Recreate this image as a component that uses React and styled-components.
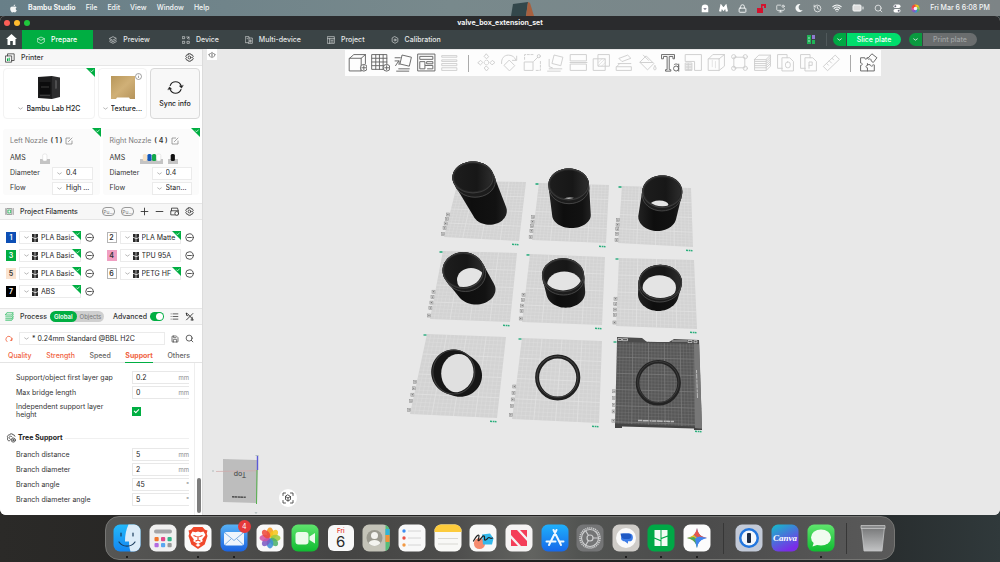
import React from "react";
import styled, { createGlobalStyle } from "styled-components";
import { Wifi, Search, History, MonitorDot, BatteryFull, Lock, List, Save } from "lucide-react";
import { FaApple, FaMoon } from "react-icons/fa";

const GREEN = "#00ae42";

const GlobalStyle = createGlobalStyle`
  *, *::before, *::after { box-sizing: border-box; }
  body {
    margin: 0;
    font-family: Inter, "Liberation Sans", sans-serif;
    font-size: 7px;
    line-height: 10px;
    color: #333;
    background: #20211f;
  }
  button, input, select { font: inherit; color: inherit; margin: 0; padding: 0; border: 0; background: none; }
  button { display: inline-flex; align-items: center; justify-content: center; cursor: pointer; }
  svg { display: block; flex: none; }
  a { color: inherit; text-decoration: none; }
`;

/* ---------- shell ---------- */
const Desktop = styled.div`
  min-height: 100vh;
  display: flex;
  flex-direction: column;
  background: linear-gradient(90deg, #2b2a28, #1f1f1e 50%, #262a2b 85%, #30393b);
`;
const MenuBar = styled.header`
  height: 16px;
  display: flex;
  align-items: center;
  justify-content: space-between;
  padding: 0 10px 0 9px;
  color: #f4f6f6;
  background: linear-gradient(90deg, #687f88, #78898c 45%, #7d8486);
`;
const MenuGroup = styled.nav`
  display: flex;
  align-items: center;
  gap: 10px;
  font-weight: 500;
  white-space: nowrap;
`;
const AppName = styled.a`
  font-weight: 700;
`;
const RoofPeek = styled.svg`
  margin-left: 292px;
  align-self: flex-end;
`;
const AppWindow = styled.main`
  flex: 1;
  display: flex;
  flex-direction: column;
  border-radius: 5px 5px 6px 6px;
  overflow: hidden;
  background: #e8e8e8;
`;
const TitleBar = styled.div`
  height: 14px;
  display: grid;
  grid-template-columns: 1fr auto 1fr;
  align-items: center;
  background: #2a2b2d;
  color: #f2f2f2;
  font-weight: 700;
`;
const Lights = styled.div`
  display: flex;
  gap: 4px;
  padding-left: 4px;
`;
const Light = styled.button`
  width: 6px;
  height: 6px;
  border-radius: 50%;
  background: ${(p) => p.$color};
`;
const TabBar = styled.nav`
  height: 19px;
  display: flex;
  align-items: stretch;
  background: #3b4446;
  color: #e6e8e8;
`;
const HomeButton = styled.button`
  width: 22px;
  color: #fff;
`;
const Tab = styled.button`
  gap: 6px;
  padding: 0 ${(p) => p.$after || 13}px 0 ${(p) => p.$before || 13}px;
  font-weight: 500;
  color: ${(p) => (p.$active ? "#fff" : "inherit")};
  background: ${(p) => (p.$active ? GREEN : "none")};
`;
const Actions = styled.div`
  margin-left: auto;
  display: flex;
  align-items: center;
  gap: 8px;
  padding-right: 23px;
`;
const BarRule = styled.span`
  width: 1px;
  height: 13px;
  margin: 0 -2px 0 3px;
  background: #50595b;
`;
const SplitButton = styled.div`
  display: flex;
  gap: 1px;
  height: 13px;
  border-radius: 7px;
  overflow: hidden;
  button:first-child { width: 13px; background: ${(p) => (p.$off ? "#0a9a3f" : "#00a843")}; color: #fff; }
  button:last-child {
    width: 54px;
    font-weight: 500;
    background: ${(p) => (p.$off ? "#6a6d6e" : "#00de6c")};
    color: ${(p) => (p.$off ? "#9fa2a3" : "#fff")};
  }
`;
const Workspace = styled.div`
  flex: 1;
  display: flex;
`;

/* ---------- sidebar ---------- */
const Sidebar = styled.aside`
  width: 203px;
  flex: none;
  display: flex;
  flex-direction: column;
  background: #fff;
  border-right: 1px solid #dcdcdc;
`;
const SectionHead = styled.div`
  height: 17px;
  display: flex;
  align-items: center;
  gap: 6px;
  padding: 0 8px 0 5px;
  border: solid #e6e6e6;
  border-width: 1px 0;
  background: #f7f7f7;
`;
const SectionTitle = styled.h2`
  margin: 0;
  font-size: 7px;
  font-weight: 500;
  white-space: nowrap;
`;
const HeadTools = styled.div`
  margin-left: auto;
  display: flex;
  align-items: center;
  gap: 6px;
`;
const PrinterRow = styled.div`
  display: grid;
  grid-template-columns: 92px 49px 50px;
  gap: 3px;
  padding: 2px 3px 0;
`;
const DeviceCard = styled.div`
  position: relative;
  height: 51px;
  display: flex;
  flex-direction: column;
  align-items: center;
  justify-content: space-between;
  padding: 7px 4px 3px;
  border: 1px solid #f3f3f3;
  border-radius: 4px;
  font-weight: 500;
`;
const SyncButton = styled.button`
  height: 51px;
  flex-direction: column;
  gap: 3px;
  font-weight: 500;
  color: #222;
  background: #f8f8f8;
  border: 1px solid #d9d9d9;
  border-radius: 4px;
`;
const CornerBadge = styled.svg`
  position: absolute;
  top: -1px;
  right: -1px;
`;
const InfoBadge = styled.svg`
  position: absolute;
  top: 4px;
  right: 4px;
`;
const NozzleRow = styled.div`
  display: grid;
  grid-template-columns: 1fr 1fr;
  gap: 3px;
  padding: 10px 3px 8px;
`;
const NozzleCard = styled.div`
  position: relative;
  display: grid;
  grid-template-columns: 42px 1fr;
  grid-template-rows: 20px 14px 16px 14px;
  align-items: center;
  padding: 2px 7px 0;
  background: #fbfbfb;
  border-radius: 3px;
`;
const NozzleTitle = styled.div`
  grid-column: 1 / -1;
  display: flex;
  align-items: center;
  gap: 3px;
  color: #7a7a7a;
  white-space: nowrap;
  b { color: #333; font-weight: 600; }
`;
const AmsRow = styled.div`
  grid-column: 1 / -1;
  display: flex;
  align-items: center;
  gap: 5px;
  > span { width: 25px; }
`;
const DropBox = styled.span`
  position: relative;
  flex: ${(p) => (p.$grow ? 1 : "none")};
  min-width: 0;
  height: 13px;
  display: flex;
  align-items: center;
  gap: ${(p) => (p.$tight ? 3 : 4)}px;
  padding-left: ${(p) => (p.$bare ? 0 : 4)}px;
  border: ${(p) => (p.$bare ? "0" : "1px solid #ebebeb")};
  background: #fff;
  select {
    appearance: none;
    flex: 1;
    min-width: 0;
    outline: none;
    color: #262626;
  }
`;
const FilamentGrid = styled.div`
  display: grid;
  grid-template-columns: repeat(2, minmax(0, 1fr));
  row-gap: 5px;
  column-gap: 13px;
  padding: 11px 8px 10px 6px;
`;
const FilamentItem = styled.div`
  display: flex;
  align-items: center;
  gap: 3px;
`;
const RemoveButton = styled.button`
  margin-left: 1px;
`;
const ColorChip = styled.button`
  width: 10px;
  height: 11px;
  font-weight: 600;
  background: ${(p) => p.$color};
  color: ${(p) => (p.$dark ? "#fff" : "#333")};
  box-shadow: ${(p) => (p.$outlined ? "inset 0 0 0 1px #b4b4b4" : "none")};
`;
const PillButton = styled.button`
  width: 13px;
  height: 9px;
  border: 1px solid #999;
  border-radius: 4px;
  font-size: 5px;
  line-height: 6px;
  color: #777;
`;
const Segments = styled.div`
  display: flex;
  margin-left: -3px;
  height: 11px;
  border-radius: 6px;
  background: #cfcfcf;
`;
const Segment = styled.button`
  padding: 0 ${(p) => (p.$on ? 4 : 3)}px;
  border-radius: 6px;
  font-size: 6px;
  font-weight: ${(p) => (p.$on ? 600 : 400)};
  color: ${(p) => (p.$on ? "#fff" : "#777")};
  background: ${(p) => (p.$on ? GREEN : "none")};
`;
const SwitchLabel = styled.label`
  display: flex;
  align-items: center;
  gap: 3px;
  font-weight: 500;
`;
const Switch = styled.input`
  appearance: none;
  width: 14px;
  height: 9px;
  border-radius: 5px;
  background: ${GREEN};
  &::after {
    content: "";
    display: block;
    width: 7px;
    height: 7px;
    margin: 1px 1px 1px 6px;
    border-radius: 50%;
    background: #fff;
  }
`;
const PresetRow = styled.div`
  display: flex;
  align-items: center;
  gap: 6px;
  padding: 7px 8px 5px 5px;
`;
const ProcessTabs = styled.div`
  display: flex;
  justify-content: space-between;
  padding: 0 12px 0 8px;
  border-bottom: 1px solid #e4e4e4;
`;
const ProcessTab = styled.button`
  height: 12px;
  color: ${(p) => (p.$changed ? "#f0623f" : "#666")};
  font-weight: ${(p) => (p.$active ? 700 : 500)};
  box-shadow: ${(p) => (p.$active ? `0 1px 0 ${GREEN}` : "none")};
`;
const SettingsPane = styled.div`
  flex: 1;
  display: flex;
`;
const SettingsList = styled.div`
  flex: 1;
  min-width: 0;
  padding: 7px 5px 7px 16px;
`;
const ScrollTrack = styled.div`
  width: 8px;
  flex: none;
  display: flex;
  align-items: flex-end;
  justify-content: center;
  border-left: 1px solid #eee;
  padding-bottom: 2px;
`;
const ScrollThumb = styled.div`
  width: 4px;
  height: 35px;
  border-radius: 2px;
  background: #7d7d7d;
`;
const SettingRow = styled.label`
  display: grid;
  grid-template-columns: 116px minmax(0, 1fr);
  align-items: center;
  min-height: ${(p) => (p.$tall ? 22 : 15)}px;
  line-height: 8px;
  > span:first-child { max-width: 104px; }
`;
const NumberBox = styled.span`
  display: flex;
  align-items: center;
  height: 13px;
  padding-left: 3px;
  border: solid #e8e8e8;
  border-width: 1px 0 1px 1px;
  input { flex: 1; min-width: 0; outline: none; color: #222; }
  small { font-size: 6px; color: #8a8a8a; }
`;
const Check = styled.input`
  appearance: none;
  width: 9px;
  height: 9px;
  background: ${GREEN};
  &::after {
    content: "";
    display: block;
    width: 5px;
    height: 3px;
    margin: 2px;
    border: solid #fff;
    border-width: 0 0 1px 1px;
    transform: rotate(-45deg);
  }
`;
const GroupTitle = styled.h3`
  display: flex;
  align-items: center;
  gap: 2px;
  margin: 11px 0 4px -10px;
  font-size: 7px;
  font-weight: 700;
  color: #222;
  &::after { content: ""; flex: 1; height: 1px; background: #f0f0f0; }
`;

/* ---------- viewport ---------- */
const Viewport = styled.section`
  flex: 1;
  position: relative;
  display: flex;
  background: #e8e8e8;
`;
const Scene = styled.svg`
  width: 100%;
  height: auto;
  align-self: flex-start;
`;
const CollapseButton = styled.button`
  position: absolute;
  top: 0;
  left: 4px;
  width: 10px;
  height: 11px;
  background: #fff;
`;
const ToolStrip = styled.div`
  position: absolute;
  top: 1px;
  left: 142px;
  height: 26px;
  display: flex;
  align-items: center;
  padding: 0 1px;
  background: #fdfdfd;
`;
const Tool = styled.button`
  width: 23px;
  height: 24px;
  padding-bottom: 2px;
  color: ${(p) => (p.$off ? "#cfcfcf" : "#666")};
`;
const ToolRule = styled.span`
  width: 1px;
  height: 17px;
  margin: 0 6px 0 7px;
  background: #aaa;
`;
const FitButton = styled.button`
  position: absolute;
  bottom: 8px;
  left: 76px;
  width: 18px;
  height: 18px;
  border-radius: 50%;
  background: #fff;
  color: #444;
`;

/* ---------- dock ---------- */
const DockArea = styled.footer`
  height: 47px;
  display: flex;
  justify-content: center;
  align-items: flex-start;
  padding-top: 1px;
`;
const Dock = styled.nav`
  width: 79%;
  min-width: 790px;
  height: 44px;
  display: flex;
  align-items: center;
  justify-content: space-between;
  padding: 0 7px;
  border: 1px solid #767674;
  border-radius: 14px;
  background: linear-gradient(90deg, #565654, #444443 30%, #4d4d4c 44%, #626360 54%, #525452 60%, #4b4b4b 75%, #5a5a5a);
`;
const DockItem = styled.button`
  position: relative;
  width: 28px;
  height: 28px;
  &::after {
    content: "";
    display: ${(p) => (p.$running ? "block" : "none")};
    position: absolute;
    bottom: -6px;
    left: 13px;
    width: 2px;
    height: 2px;
    border-radius: 50%;
    background: #0c0c0c;
  }
`;
const DockRule = styled.span`
  width: 1px;
  height: 31px;
  margin: 0 4px;
  background: #373737;
`;
const CountBadge = styled.span`
  position: absolute;
  top: -4px;
  right: -3px;
  width: 13px;
  height: 13px;
  border-radius: 50%;
  background: #e5393a;
  color: #fff;
  font-size: 7px;
  line-height: 13px;
`;
const CalendarFace = styled.span`
  width: 26px;
  height: 26px;
  display: flex;
  flex-direction: column;
  align-items: center;
  justify-content: center;
  border-radius: 6px;
  background: #f8f8f8;
  color: #2a2a2a;
  font-size: 15px;
  line-height: 15px;
  small { font-size: 6px; line-height: 7px; font-weight: 600; color: #e8493f; }
`;

/* ---------- small drawings ---------- */
const Line = ({ w = 10, box = 12, sw = 0.9, children, ...rest }) => (
  <svg width={w} height={w} viewBox={`0 0 ${box} ${box}`} fill="none" stroke="currentColor" strokeWidth={sw} strokeLinecap="round" strokeLinejoin="round" {...rest}>
    {children}
  </svg>
);
const Chevron = ({ color = "#a0a0a0" }) => (
  <Line w={5} box={6} sw={0.9} color={color}><path d="M.8 2.200l2.200 1.600 2.200-1.600" /></Line>
);
const Corner = () => (
  <CornerBadge width="9" height="9" viewBox="0 0 9 9">
    <path d="M0 0h9v9z" fill={GREEN} />
    <path d="M4.400 2.600l1.200 1.200 2-2.200" stroke="#fff" strokeWidth=".7" fill="none" />
  </CornerBadge>
);
const BambuMark = () => (
  <svg width="6" height="8" viewBox="0 0 6 8" fill="#2b2b2b">
    <path d="M0 0h2.700v3.900L0 2.900zM0 3.700l2.700 1V8H0zM3.300 0H6v3.200L3.300 4.200zM3.300 5L6 4v4H3.300z" />
  </svg>
);
const Spool = ({ colors, wide }) => (
  <svg width={wide ? 23 : 10} height="12" viewBox={`0 0 ${wide ? 23 : 10} 12`}>
    <path d={wide ? "M0 12V7h23v5z" : "M0 12V7h10v5z"} fill="#c4c4c4" />
    {colors.map((c, i) => (
      <rect key={i} x={(wide ? 2.8 : 2.7) + i * 4.6} y="2" width="4.200" height="7" rx="1.500" fill={c} stroke={c === "#fff" ? "#ccc" : "none"} strokeWidth=".4" />
    ))}
  </svg>
);
const Gear = () => (
  <Line w={9} box={12} sw={1.1}>
    <path d="M4.600 1h2.800l.6 1.500 1.600-.2L11 4.700 10 6l1 1.300-1.400 2.400L8 9.500 7.400 11H4.600L4 9.500l-1.600.2L1 7.300 2 6 1 4.700l1.400-2.400 1.600.2z" />
    <circle cx="6" cy="6" r="1.900" />
  </Line>
);
const TreeIcon = () => (
  <Line w={10} box={12} sw={0.8}>
    <path d="M4.500 9.200L3 9.500 1.500 7.200l.8-1.300-.8-1.300L3 2.200l1.500.2.700-1.400h2.400l.7 1.400 1.400-.2 1 1.800" />
    <path d="M7.500 4.800a2 2 0 1 0-2 2.900" /><circle cx="8.800" cy="8.500" r="2.500" /><path d="M8.800 7.400v2.200M7.700 8.500h2.200" />
  </Line>
);
const ToolsIcon = () => (
  <Line w={9} sw={1.2}><path d="M2 10.500L10.500 2M1.500 2l2 .3 6.500 7M8 10.500h3M9.500 7v4M2 1.500v3l2 .5" /></Line>
);
const Edit = () => (
  <Line w={8} box={12} sw={1} color="#777"><path d="M7 1.500H1.500v9h9V6M5 7l5.500-5.500" /></Line>
);
const Remove = () => (
  <Line w={9} box={12} sw={1.1}><circle cx="6" cy="6" r="5" /><path d="M3.500 6h5" /></Line>
);

/* ---------- toolbar drawings (18 unit grid) ---------- */
const toolShapes = {
  addCube: <><path d="M1.500 5h11v12h-11zM1.500 5l4-3.500h11l-4 3.500M16.500 1.500V10M12.500 14v3" /><circle cx="15" cy="14" r="3.200" fill="#fff" /><path d="M13 14h4M15 12v4" /></>,
  addPlate: <><path d="M1 1.500h14v14H1zM4.500 1.500v14M8 1.500v14M11.500 1.500v14M1 5h14M1 8.500h14M1 12h14" /><circle cx="14.800" cy="14" r="3.200" fill="#fff" /><path d="M13 14h4M14.800 12v4" /></>,
  orient: <><path d="M8 2l8.500 2-2 8.500L6 10.500zM4.500 15h10M2.500 17.200h11.500M1 4.500h5M1.500 12l3-4.500M4.500 7.500H1M4.800 8v3" /></>,
  arrange: <><path d="M1 1h16v16H1zM3 3.200h12v2.800H3zM3 8.200h4.500V15H3zM9.500 8.200H15v2H9.500zM8 11.800h7V15h-5" /></>,
  layers: <><path d="M2 2.500h14v1.500H2zM2 6.500h14V8H2zM2 10h14v2H2zM2 14h14v2.500H2z" /></>,
  move: <><circle cx="9" cy="9" r="2.200" strokeDasharray="1.500 1" /><path d="M9 1l2 2.500L9 5.500 7 3.500zM9 12.500l2 2-2 2.500-2-2.500zM1 9l2.500-2 2 2-2 2zM12.500 9l2-2L17 9l-2.500 2z" /></>,
  rotate: <><path d="M9 7l5 5-5 5-5-5zM1.500 10C1 5 4 2 8 2c3.500 0 6 2 7 4.500M15.800 3v4h-4" /></>,
  scale: <><path d="M1.500 8.500h8v8h-8z" /><path d="M1.500 6V1.500H10M16.500 8v8.500H12" strokeDasharray="2 1.500" /><path d="M10 8l4-4" /><circle cx="15" cy="3" r="1.500" /></>,
  lay: <><path d="M8 2l8 2-2 8-8-2zM3 15h12M1.500 17.200h12M3 6v7l3 1" /></>,
  cut: <><path d="M1.500 1.500h15v6h-15zM1.500 10.500h15v6h-15zM1 9h16" /></>,
  bool: <><path d="M1.500 5.500h11v11h-11zM6 1.500h10.500v11H6z" /><path d="M6 9l3.500-3.500M6 12l6.500-6.500M9 12.500l3.500-3.500" strokeWidth=".5" /></>,
  paintSupport: <><path d="M4 5l8-3 3 3-8 3zM3 10h12M1.500 13h14v3.500H1.500zM1.500 13l3-3" /></>,
  bucket: <><path d="M8 3l7 7-6 6-7-7zM2 9h12M5 2l5 5" /><path d="M16 12c1.500 2 1.500 4 0 4s-1.500-2 0-4" /></>,
  text: <><path d="M.8 1.500h12v4h-1.500V3.300H7.800v12.500h1.500v1.400H4.300v-1.400h1.500V3.300H2.300v2.200H.8z" /><path d="M16.800 10.500v6.700M12.500 11c1.200-1.200 4.300-.8 4.300 1.500" /><circle cx="14.300" cy="14.700" r="2.400" /></>,
  svgTool: <><path d="M1.500 1.500h15v15H10V8H1.500z" /><path d="M1.500 9.500h6v7h-6zM2 11h5M2 12.500h5M2 14h5M2 15.500h5M4 10v6" /></>,
  box: <><path d="M1.500 5.500h10v11h-10zM1.500 5.500l4-4h11l-5 4M16.500 1.500v11l-5 4" /><path d="M8 8v6M5 7v6" strokeWidth=".5" /></>,
  frame: <><path d="M4 4h10v10H4z" /><circle cx="3.500" cy="3.500" r="2" /><circle cx="14.500" cy="3.500" r="2" /><circle cx="3.500" cy="14.500" r="2" /><circle cx="14.500" cy="14.500" r="2" /></>,
  stack: <><path d="M1.500 6l4-4h11l-4 4zM1.500 6v10.500h11V6M16.500 2v10.500l-4 4M1.500 8h11l4-4M1.500 10h11l4-4M1.500 12h11l4-4M1.500 14h11l4-4" /></>,
  pageO: <><path d="M6 14.500H1.500v-13h9v3M6 4.500h7l3.500 3.500v9H6z" /><rect x="9" y="8.500" width="4.500" height="5.500" rx="2" /></>,
  pageP: <><path d="M6 14.500H1.500v-13h9v3M6 4.500h7l3.500 3.500v9H6zM9.500 14.500v-6h3v3.200h-3" /></>,
  ruler: <><path d="M1.500 12.500l11-10.500 4 4L5.500 16.500zM4.500 10l1.500 1.500M7 7.500l2 2M9.500 5l1.500 1.500" /></>,
  assembly: <><path d="M8.500 4.500H7.500c.3 1.800-2.300 1.800-2 0H1.500v5c2-.4 2 2.600 0 2.200V17h13v-5.500M8 17v-3c-1.800.3-1.800-2.500 0-2.200V10M1.500 10.800M8 11h2.500c.3 2 3 2 3 0M12.500 1L17 4.500 13.500 9l-2-1.500c.5-1.800-1.500-2.500-2.500-1.500L8.500 5.500z" /></>,
};
const tools = [
  ["addCube", "Add"], ["addPlate", "Add plate"], ["orient", "Auto orient"], ["arrange", "Arrange"], ["layers", "Variable layer height", true], null,
  ["move", "Move", true], ["rotate", "Rotate", true], ["scale", "Scale", true], ["lay", "Lay on face", true], ["cut", "Cut", true], ["bool", "Mesh boolean", true],
  ["paintSupport", "Support painting", true], ["bucket", "Color painting", true], ["text", "Text"], ["svgTool", "SVG", true], ["box", "Seam", true],
  ["frame", "Brim ears", true], ["stack", "Fuzzy skin", true], ["pageO", "Split to objects", true], ["pageP", "Split to parts", true], ["ruler", "Measure", true], null,
  ["assembly", "Assembly view"],
];

/* ---------- 3D scene ---------- */
const mix = (a, b, t) => [a[0] + (b[0] - a[0]) * t, a[1] + (b[1] - a[1]) * t];
const pts = (list) => list.map((p) => p.map((n) => n.toFixed(1)).join(",")).join(" ");

function Plate({ corners, dark }) {
  const [tl, tr, br, bl] = corners;
  const n = dark ? 26 : 20;
  const lines = [];
  for (let i = 1; i < n; i++) {
    const t = i / n;
    lines.push([mix(tl, tr, t), mix(bl, br, t), i % 5 === 0], [mix(tl, bl, t), mix(tr, br, t), i % 5 === 0]);
  }
  const icons = [0.6, 0.68, 0.76, 0.84, 0.95].map((t) => mix(tl, bl, t));
  return (
    <g>
      <polygon points={pts(corners)} fill={dark ? "#585858" : "#d3d3d3"} />
      {lines.map(([a, b, major], i) => (
        <line key={i} x1={a[0]} y1={a[1]} x2={b[0]} y2={b[1]} stroke={dark ? "#808080" : "#e4e4e4"} strokeWidth={major ? 0.7 : 0.3} />
      ))}
      {icons.map(([x, y], i) => (
        <g key={i}>
          <rect x={x - 3.2} y={y - 1.6} width="3" height="3" fill="#d8d8d8" stroke="#8a8a8a" strokeWidth=".5" />
          <rect x={x - 2.3} y={y - 0.7} width="1.200" height="1.200" fill="#777" />
        </g>
      ))}
      <path d={`M${tl[0] - 3.5} ${tl[1] + 1}h3`} stroke="#17a673" strokeWidth="1.300" />
      <path d={`M${br[0] - 7} ${br[1] + 3.3}l7 .4`} stroke="#2bae7c" strokeWidth="1.500" strokeDasharray="2 .7 1.300 .5" />
    </g>
  );
}

function hull(ellipses) {
  const all = [];
  ellipses.forEach(([cx, cy, rx, ry]) => {
    for (let i = 0; i < 60; i++) {
      const a = (i / 60) * Math.PI * 2;
      all.push([cx + rx * Math.cos(a), cy + ry * Math.sin(a)]);
    }
  });
  all.sort((a, b) => a[0] - b[0] || a[1] - b[1]);
  const cross = (o, a, b) => (a[0] - o[0]) * (b[1] - o[1]) - (a[1] - o[1]) * (b[0] - o[0]);
  const half = (list) => {
    const out = [];
    list.forEach((p) => {
      while (out.length > 1 && cross(out[out.length - 2], out[out.length - 1], p) <= 0) out.pop();
      out.push(p);
    });
    out.pop();
    return out;
  };
  return [...half(all), ...half([...all].reverse())];
}

function Tube({ id, top, base, hole, lip }) {
  const [cx, cy, rx, ry] = top;
  return (
    <g>
      <clipPath id={id}><ellipse cx={cx} cy={cy} rx={rx - 1.8} ry={ry - 1.8} /></clipPath>
      <polygon points={pts(hull([top, base]))} fill="url(#wall)" />
      <polygon points={pts(hull([top, [cx + lip[0], cy + lip[1], rx, ry]]))} fill="#1f1f1f" />
      <ellipse cx={cx + lip[0]} cy={cy + lip[1]} rx={rx - 0.5} ry={ry - 0.3} fill="#1c1c1c" stroke="#484848" strokeWidth=".9" />
      <ellipse cx={cx} cy={cy} rx={rx - 0.6} ry={ry - 0.6} fill="#242424" stroke="#3c3c3c" strokeWidth="1.100" />
      <g clipPath={`url(#${id})`}>
        <ellipse cx={cx} cy={cy} rx={rx - 1.8} ry={ry - 1.8} fill="url(#bore)" />
        {hole && <ellipse cx={hole[0]} cy={hole[1]} rx={hole[2]} ry={hole[3]} fill="#e4e4e4" />}
      </g>
    </g>
  );
}

const plates = [
  [[458, 181], [526, 182], [519, 241], [444, 237]],
  [[539, 183], [609, 185], [606, 243], [532, 240]],
  [[622, 186], [691, 188], [693, 247], [618, 243]],
  [[443, 251], [517, 253], [510, 322], [430, 319]],
  [[530, 254], [605, 257], [602, 325], [522, 322]],
  [[619, 258], [694, 260], [697, 329], [616, 326]],
  [[427, 334], [506, 337], [497, 418], [410, 414]],
  [[522, 338], [602, 341], [599, 423], [512, 419]],
];
const tubes = [
  { top: [473, 177.5, 20.7, 16], base: [489.5, 211, 17.3, 13.8], lip: [2, 4] },
  { top: [568.7, 184.5, 20.3, 16], base: [571.5, 215, 19.3, 13], lip: [0.3, 3.5], hole: [569.8, 199.7, 8, 2.2] },
  { top: [662.3, 191.7, 20, 16.3], base: [657.3, 216.7, 19, 14.3], lip: [-0.5, 3.2], hole: [659.3, 204.5, 9, 4] },
  { top: [463.3, 270.5, 20.8, 18.3], base: [476, 289.5, 19.5, 15], lip: [2, 3], hole: [471, 280, 14, 12] },
  { top: [563, 275.3, 21, 17], base: [565.7, 292, 19.5, 15.7], lip: [0.5, 3], hole: [564.3, 284, 17, 12.5] },
  { top: [660.3, 282.3, 21.7, 17.5], base: [658.3, 294, 20.3, 17], lip: [-0.5, 2.5], hole: [659.3, 287.7, 16.7, 12.5] },
];

const BuildScene = () => (
  <Scene viewBox="203 49 797 466" role="img" aria-label="Build plates">
    <defs>
      <linearGradient id="wall"><stop offset="0" stopColor="#222" /><stop offset=".35" stopColor="#0e0e0e" /><stop offset=".8" stopColor="#121212" /><stop offset="1" stopColor="#222" /></linearGradient>
      <linearGradient id="bore"><stop offset="0" stopColor="#1d1d1d" /><stop offset=".6" stopColor="#171717" /><stop offset="1" stopColor="#2c2c2c" /></linearGradient>
    </defs>
    {plates.map((c, i) => <Plate key={i} corners={c} />)}
    <Plate dark corners={[[617, 341], [699, 343], [702, 428], [615, 425]]} />
    <path d="M617 337l25 1 5 4h22l5-3 25 1 .2 4L617 342z" fill="#4b4b4b" />
    <path d="M618 338.500h3.500v2H618zM622.500 338.700h5v2h-5zM672 341h15M688 340.500h4v2h-4zM694 340.700h3v2h-3z" fill="none" stroke="#ddd" strokeWidth=".7" />
    <path d="M694 344l5.300.2 2.700 84-7-.3z" fill="#777" />
    <path d="M615 423.500l80 3v1.500l7 .3V430h-8v-1.500l-72-2v1.500h-7z" fill="#444" />
    <path d="M638 420.500l36 1" stroke="#bbb" strokeWidth="1.500" strokeDasharray="4 .6 6 1 2 .5" />
    <path d="M696.500 370l1 28" stroke="#bbb" strokeWidth="1" strokeDasharray="3 .7 5 1" />
    {tubes.map((t, i) => <Tube key={i} id={`tube${i}`} {...t} />)}
    <g fill="none">
      <polygon points={pts(hull([[453.5, 372, 22.3, 22.5], [460, 375.5, 22, 21.3]]))} fill="#161616" />
      <ellipse cx="453.800" cy="372" rx="21" ry="22" stroke="#3c3c3c" strokeWidth="1.200" />
      <clipPath id="ring7"><ellipse cx="453.800" cy="372" rx="19.800" ry="20.500" /></clipPath>
      <ellipse cx="458.500" cy="373.500" rx="17.300" ry="19.500" fill="#e0e0e0" clipPath="url(#ring7)" />
      <ellipse cx="557.700" cy="377.600" rx="20.600" ry="21" stroke="#1f1f1f" strokeWidth="4" />
      <ellipse cx="557.500" cy="376.800" rx="20.500" ry="20.500" stroke="#4a4a4a" strokeWidth=".8" />
      <ellipse cx="658.300" cy="382.800" rx="20.800" ry="21" stroke="#232323" strokeWidth="3.600" />
      <ellipse cx="658.300" cy="382" rx="20.600" ry="20.600" stroke="#444" strokeWidth=".7" />
    </g>
    <path d="M223 459l35 1-1 43-34-1z" fill="#bdbdbd" />
    <path d="M216 471.500l41-.8" stroke="#d3a9a9" strokeWidth=".7" />
    <path d="M257.500 456v14" stroke="#5b5bd6" strokeWidth="1.400" />
    <path d="M257 470l-.5 34" stroke="#55b04c" strokeWidth="1" />
    <text transform="rotate(180 240 474.500)" x="240" y="477" textAnchor="middle" fontSize="7" fill="#3c3c3c">Top</text>
    <path d="M232 496.800l14 .5" stroke="#555" strokeWidth="1.600" strokeDasharray="2 .4 3 .5" />
    <path d="M255.500 455.500h3M255 512l1 1.500 1-1.500M213 470v2" stroke="#9aa" strokeWidth=".7" fill="none" />
  </Scene>
);

/* ---------- dock drawings (28 unit grid) ---------- */
const Tile = ({ fill, children }) => (
  <svg width="28" height="28" viewBox="0 0 28 28">
    <rect x=".5" y=".5" width="27" height="27" rx="6.500" fill={fill} />
    {children}
  </svg>
);
const petals = ["#f79a1c", "#f7c51d", "#9fc93c", "#4fb26b", "#3f8fd6", "#7c5cc4", "#d254a4", "#ee4b3d"];
const dockApps = [
  { name: "Finder", running: true, art: <Tile fill="url(#gFinder)"><path d="M15.500 .5H21a6.500 6.500 0 0 1 6.500 6.500v14a6.500 6.500 0 0 1-6.500 6.500h-3.500c-1-3-1.500-6-1.500-10h-4c0-6 1-12 3.500-17z" fill="#dcecf8" /><path d="M8 9v3M20 9v3M6 18c4 5.500 12 5.500 16 0" stroke="#1b3c5c" strokeWidth="1.200" fill="none" strokeLinecap="round" /></Tile> },
  { name: "Launchpad", art: <Tile fill="#f0f0f0"><rect x="5" y="5.500" width="18" height="4" rx="2" fill="#a5a5a8" />{["#f1762f", "#e24a89", "#31b58a", "#b46be0", "#5aa7f0", "#9a9a9a"].map((c, i) => <rect key={c} x={5.5 + (i % 3) * 6.5} y={13 + Math.floor(i / 3) * 6} width="4.200" height="4.200" rx="1" fill={c} />)}</Tile> },
  { name: "Brave", running: true, art: <Tile fill="#fafafa"><path d="M9.500 3h9l2.500 2.800 2.500.7-.8 3 .8 2.500-2.800 8.500L14 25l-6.700-4.500L4.500 12l.8-2.500-.8-3L7 5.800z" fill="#f0482b" /><path d="M8.500 7.500l3 .7L14 7.500l2.500.7 3-.7 2 3.500-3.300 4.200.5 2-4.700 2.800-4.700-2.800.5-2L6.500 11z" fill="#fff" /><path d="M9.500 11.500l3.200 1.200M18.500 11.500l-3.200 1.200M14 12v4M11.500 17.300l2.500-1.300 2.500 1.300" stroke="#f0482b" strokeWidth="1.200" fill="none" /><path d="M11.500 21l2.500-1.200L16.500 21 14 22.800z" fill="#fff" /></Tile> },
  { name: "Mail", running: true, badge: "4", art: <Tile fill="url(#gMail)"><rect x="4" y="8" width="20" height="13.500" rx="2.500" fill="#eef5fc" /><path d="M5 9l9 7.500L23 9M5 20.500l6.500-6M23 20.500l-6.500-6" stroke="#7fb0e4" fill="none" /></Tile> },
  { name: "Photos", art: <Tile fill="#f8f8f8">{petals.map((c, i) => <ellipse key={c} cx="14" cy="8.500" rx="3.300" ry="5" fill={c} opacity=".88" transform={`rotate(${i * 45} 14 14)`} />)}</Tile> },
  { name: "FaceTime", art: <Tile fill="url(#gGreen)"><rect x="4.500" y="8" width="13" height="12.500" rx="3" fill="#eafbea" /><path d="M18.500 12.500L24 9v10.500l-5.500-3.500z" fill="#eafbea" /></Tile> },
  { name: "Calendar", art: <CalendarFace><small>Fri</small>6</CalendarFace> },
  { name: "Contacts", art: <Tile fill="#c4c3b8"><path d="M23.500 1v26a6.500 6.500 0 0 0 4-6V7a6.500 6.500 0 0 0-4-6z" fill="#57bd79" /><path d="M23.500 5h4v6h-4z" fill="#31b3d8" /><path d="M23.500 11h4v7h-4z" fill="#f2923a" /><circle cx="12.500" cy="14" r="8" fill="#9a998f" /><circle cx="12.500" cy="11.500" r="3.500" fill="#f3f3ef" /><path d="M6.500 19c2-4 10-4 12 0-3 4-9 4-12 0z" fill="#f3f3ef" /></Tile> },
  { name: "Reminders", art: <Tile fill="#f8f8f8"><circle cx="6" cy="7" r="1.700" fill="#3b8df2" /><circle cx="6" cy="14" r="1.700" fill="#ea5247" /><circle cx="6" cy="21" r="1.700" fill="#f29a45" /><path d="M10 7h13M10 14h13M10 21h13" stroke="#ccc" strokeWidth=".8" /></Tile> },
  { name: "Notes", art: <Tile fill="#f8f8f6"><path d="M.5 8V7A6.500 6.500 0 0 1 7 .5h14A6.500 6.500 0 0 1 27.500 7v1z" fill="#fccb3c" /><path d="M4 14.500h20M4 20h20" stroke="#cfcfcb" strokeWidth=".8" /></Tile> },
  { name: "Freeform", art: <Tile fill="#f8f8f8"><circle cx="10.500" cy="19.500" r="5.600" fill="#f58a6e" /><path d="M13 10.500l8-1 3.500 5-1.500 6h-9z" fill="#32b8ec" /><path d="M4.500 17c2.500-5 5.500-7.500 5.500-5s-2 5.500 0 4.500 3.500-5.500 5-4.500-.5 4.500 1.500 4 2-2.500 3.500-2.500 1 1.500 3.500.5" stroke="#222" strokeWidth="1.200" fill="none" strokeLinecap="round" /></Tile> },
  { name: "News", art: <Tile fill="#f5f3f3"><path d="M6 6h6l10 11v5h-6L6 11zM15 6h7v7.500zM6 14.500l7 7.500H6z" fill="#f43e59" /></Tile> },
  { name: "App Store", art: <Tile fill="url(#gStore)"><path d="M15.500 6L8 21M12.500 6L20 21M5.500 17.500h9M18.500 17.500h4" stroke="#eef8ff" strokeWidth="2" strokeLinecap="round" /></Tile> },
  { name: "System Settings", art: <Tile fill="#747576"><circle cx="14" cy="14" r="10" fill="none" stroke="#cdcecf" strokeWidth="1.600" strokeDasharray="1.200 .8" /><circle cx="14" cy="14" r="8.500" fill="none" stroke="#cdcecf" strokeWidth="1.200" /><circle cx="14" cy="14" r="3" fill="none" stroke="#cdcecf" strokeWidth="1.200" /><path d="M17 14h5.500M12.500 11.500L9.500 6.500M12.500 16.500l-3 5" stroke="#cdcecf" strokeWidth="1.200" /></Tile> },
  { name: "Google Messages", running: true, art: <Tile fill="#cfccc8"><circle cx="14" cy="14" r="10" fill="#fafafa" /><path d="M10.500 9.500H17a3.500 3.500 0 0 1 0 7.800h-1v2.500l-3.500-2.500h-1a3 3 0 0 1-2.500-3z" fill="#3d7de8" /><path d="M8.500 9.500h8a2.700 2.700 0 0 1 0 5.400h-4.500a3.500 3.500 0 0 1-3-3z" fill="#1f59c4" /></Tile> },
  { name: "Bambu Studio", running: true, art: <Tile fill="#00a846"><path d="M7.500 6h6v10l-6-2.500zM7.500 14.800l6 2.500V22h-6zM14.500 6h6v5.500l-6 2.300zM14.500 15l6-2.300V22h-6z" fill="#f3fbf5" /></Tile> },
  { name: "Gemini", running: true, art: <Tile fill="#fcfcfc"><path d="M14 4c1 6 4 9 10 10-6 1-9 4-10 10-1-6-4-9-10-10C10 13 13 10 14 4z" fill="#4285ee" /><path d="M14 4c1 6 4 9 10 10h-8l-5.500-3.200C12.500 9 13.500 7 14 4z" fill="#e8554a" /><path d="M10.500 10.800C9 12.500 7 13.500 4 14c3 .5 5 1.500 6.500 3.200L14 14z" fill="#f0bb1c" /><path d="M4 14c6 1 9 4 10 10l.5-8L11 13z" fill="#4fa85c" /><path d="M14 24c1-6 4-9 10-10l-8-1.500L12 15z" fill="#4285ee" /></Tile> },
  null,
  { name: "1Password", art: <Tile fill="#c3cad8"><circle cx="14" cy="14" r="10" fill="#2276de" /><circle cx="14" cy="14" r="7.500" fill="#f4f7fb" /><rect x="12" y="9" width="4" height="10" rx="1" fill="#1e2c44" /></Tile> },
  { name: "Canva", art: <Tile fill="url(#gCanva)"><text x="14" y="16.500" textAnchor="middle" fontSize="9" fontStyle="italic" fontWeight="700" fontFamily="Liberation Serif, serif" fill="#fff">Canva</text></Tile> },
  { name: "Messages", running: true, art: <Tile fill="url(#gGreen)"><ellipse cx="14" cy="13.500" rx="10" ry="8" fill="#f0fcef" /><path d="M7 18l-1.500 4.500 6-2z" fill="#f0fcef" /></Tile> },
  null,
  { name: "Trash", art: <svg width="28" height="28" viewBox="0 0 28 28"><path d="M2.500 2.500h23L23 27H5z" fill="url(#gTrash)" stroke="#c4c5c6" strokeWidth=".8" /><path d="M2 1.500h24v3H2z" fill="#8b8c8d" stroke="#d0d0d0" strokeWidth=".7" /></svg> },
];
const HiddenDefs = styled.svg`
  position: absolute;
`;
const DockDefs = () => {
  const grads = [
    ["gFinder", "#23b9fb", "#1386f0"], ["gMail", "#57b1f4", "#1a63e0"], ["gGreen", "#5fe36d", "#0fbc31"],
    ["gStore", "#1fb0fb", "#1668ea"], ["gTrash", "#747576", "#c2c3c4"], ["gCanva", "#12bfc9", "#7a2de8"],
  ];
  return (
    <HiddenDefs width="0" height="0" aria-hidden="true">
      {grads.map(([id, a, b]) => (
        <linearGradient key={id} id={id} x1="0" y1="0" x2={id === "gCanva" ? ".5" : "0"} y2="1"><stop offset="0" stopColor={a} /><stop offset="1" stopColor={b} /></linearGradient>
      ))}
    </HiddenDefs>
  );
};

/* ---------- composed parts ---------- */
const Dropdown = ({ label, value, icon, corner, ...box }) => (
  <DropBox {...box}>
    <Chevron />
    {icon}
    <select aria-label={label} defaultValue={value}><option>{value}</option></select>
    {corner && <Corner />}
  </DropBox>
);

const Nozzle = ({ side, count, flow, children }) => (
  <NozzleCard>
    <NozzleTitle><span>{side} Nozzle</span><b>( {count} )</b><Edit /></NozzleTitle>
    <AmsRow><span>AMS</span>{children}</AmsRow>
    <span>Diameter</span><Dropdown label={`${side} diameter`} value="0.4" />
    <span>Flow</span><Dropdown label={`${side} flow`} value={flow} />
    <Corner />
  </NozzleCard>
);

const filaments = [
  { n: 1, name: "PLA Basic", color: "#0d4fb5", dark: true, synced: true },
  { n: 2, name: "PLA Matte", color: "#fff", outlined: true, synced: true },
  { n: 3, name: "PLA Basic", color: GREEN, dark: true, synced: true },
  { n: 4, name: "TPU 95A", color: "#f09fc2" },
  { n: 5, name: "PLA Basic", color: "#fbe3cf", synced: true },
  { n: 6, name: "PETG HF", color: "#fff", outlined: true, synced: true },
  { n: 7, name: "ABS", color: "#000", dark: true, synced: true },
];

const Setting = ({ label, value, unit }) => (
  <SettingRow>
    <span>{label}</span>
    <NumberBox><input type="text" defaultValue={value} /><small>{unit}</small></NumberBox>
  </SettingRow>
);

const tabs = [
  { name: "Prepare", before: 15, after: 16, art: <path d="M1 4l5-2.500L11 4v5l-5 2.500L1 9zM1 4l5 2.500L11 4" /> },
  { name: "Preview", before: 16, after: 19, art: <path d="M1 3.500L6 1l5 2.500L6 6zM1 6l5 2.500L11 6M1 8.500L6 11l5-2.500" /> },
  { name: "Device", art: <path d="M1 1h3v3H1zM8 8h3v3H8zM1 8h3v3H1zM7 1.500h3.500V5M10.500 1.500L8 4" /> },
  { name: "Multi-device", art: <path d="M1 1h5v9H1zM6 3h5v8H5M3 4h1M8 6h1v3H8z" /> },
  { name: "Project", art: <path d="M1 1h10v10H1zM1 4h10M4 4v7M6 6.500h3M6 9h3" /> },
  { name: "Calibration", art: <><path d="M6 1l4.300 2.500v5L6 11 1.700 8.500v-5z" /><circle cx="6" cy="6" r="1.500" /></> },
];

export default function App() {
  return (
    <Desktop>
      <GlobalStyle />
      <MenuBar>
        <MenuGroup>
          <FaApple size={9} />
          <AppName href="#app">Bambu Studio</AppName>
          {["File", "Edit", "View", "Window", "Help"].map((m) => <a key={m} href={`#${m}`}>{m}</a>)}
          <RoofPeek width="24" height="15" viewBox="0 0 24 15"><path d="M2 3l15-2-2 14H0z" fill="#33474b" /><path d="M17 1l2 1 4 13h-8z" fill="#a7603f" /></RoofPeek>
        </MenuGroup>
        <MenuGroup>
          <svg width="8" height="9" viewBox="0 0 11 12" fill="#fff"><path d="M1 11V5a4.500 4.500 0 0 1 9 0v6z" /><path d="M3 5.500h5L5.500 8z" fill="#667" /></svg>
          <svg width="9" height="9" viewBox="0 0 12 12"><path d="M1.500 10L3 3l3 4 3-4 1.500 7" stroke="#fff" strokeWidth="3" fill="none" /></svg>
          <Lock size={9} strokeWidth={2.5} />
          <svg width="9" height="9" viewBox="0 0 9 9" fill="#d4122e"><path d="M0 4h6v5H0zM4 0h5v4H7V2H5.500v2H4z" /></svg>
          <MonitorDot size={9} />
          <FaMoon size={8} />
          <History size={9} />
          <Wifi size={10} strokeWidth={2.8} />
          <BatteryFull size={12} fill="#ddd" />
          <Search size={9} />
          <svg width="8" height="9" viewBox="0 0 8 9"><rect x=".5" y=".5" width="7" height="3.500" rx="1.700" fill="#fff" /><rect x=".5" y="5" width="7" height="3.500" rx="1.700" fill="#fff" /><circle cx="2.300" cy="2.200" r="1" fill="#667" /><circle cx="5.700" cy="6.700" r="1" fill="#667" /></svg>
          <svg width="9" height="9" viewBox="0 0 12 12">{petals.map((c, i) => <circle key={c} cx="6" cy="3" r="2.600" fill={c} transform={`rotate(${i * 45} 6 6)`} />)}<circle cx="6" cy="6" r="2.400" fill="#f6eef6" /></svg>
          <span>Fri Mar 6 6:08 PM</span>
        </MenuGroup>
      </MenuBar>

      <AppWindow>
        <TitleBar>
          <Lights>
            <Light $color="#fe5f57" aria-label="Close" />
            <Light $color="#febc2e" aria-label="Minimise" />
            <Light $color="#1fc63c" aria-label="Zoom" />
          </Lights>
          <span>valve_box_extension_set</span>
        </TitleBar>
        <TabBar>
          <HomeButton aria-label="Home">
            <svg width="11" height="11" viewBox="0 0 11 11" fill="#fff"><path d="M5.500 0L11 5H9.500v6H6.800V7H4.200v4H1.500V5H0z" /></svg>
          </HomeButton>
          {tabs.map((t, i) => (
            <Tab key={t.name} $active={i === 0} $before={t.before} $after={t.after}><Line w={8}>{t.art}</Line>{t.name}</Tab>
          ))}
          <Actions>
            <svg width="8" height="9" viewBox="0 0 8 9"><path d="M0 0h4v9H0zM5 5h3v4H5z" fill="#20b257" /><path d="M5 0h3v4H5z" fill="#8f7bd0" /><path d="M1 3h2M1 6h2" stroke="#dff" strokeWidth=".7" /></svg>
            <BarRule />
            <SplitButton><button aria-label="Slice options"><Chevron color="#fff" /></button><button>Slice plate</button></SplitButton>
            <SplitButton $off><button aria-label="Print options"><Chevron color="#fff" /></button><button>Print plate</button></SplitButton>
          </Actions>
        </TabBar>

        <Workspace>
          <Sidebar>
            <SectionHead>
              <Line w={10}><path d="M1 3.500h7V11H1zM3 3.500V1h8v8H8" /><path d="M3 9V7M5 9V6" stroke={GREEN} strokeWidth="1.300" /></Line>
              <SectionTitle>Printer</SectionTitle>
              <HeadTools><Gear /></HeadTools>
            </SectionHead>
            <PrinterRow>
              <DeviceCard>
                <svg width="22" height="23" viewBox="0 0 22 23"><path d="M0 1l14-1v23L0 22z" fill="#1c1c1d" /><path d="M14 0l8 1.500V21l-8 2z" fill="#2d2d2e" /><path d="M1.500 6h11v12h-11z" fill="#0c0c0d" /><path d="M3 11h8M2 19.500h10" stroke="#3a3a3a" /><path d="M17 4l2 .4v8l-2 .3z" fill="#4d4d4e" /></svg>
                <Dropdown $bare label="Printer model" value="Bambu Lab H2C" />
                <Corner />
              </DeviceCard>
              <DeviceCard>
                <svg width="24" height="23" viewBox="0 0 24 23"><defs><linearGradient id="pei" x2="1" y2="1"><stop stopColor="#b8975a" /><stop offset=".5" stopColor="#d0b077" /><stop offset="1" stopColor="#b5935a" /></linearGradient></defs><path d="M0 0h24v23h-5l-1-1.500H6L5 23H0z" fill="url(#pei)" /></svg>
                <Dropdown $bare $tight label="Plate type" value="Texture..." />
                <InfoBadge width="7" height="7" viewBox="0 0 7 7" fill="none" stroke="#666" strokeWidth=".6"><circle cx="3.500" cy="3.500" r="3" /><path d="M3.500 3v2M3.500 1.700v.6" /></InfoBadge>
              </DeviceCard>
              <SyncButton>
                <Line w={17} box={17} sw={1.1}><path d="M3.200 6.500a5.800 5.800 0 0 1 10.800 0M14 10.500a5.800 5.800 0 0 1-10.800 0" /><path d="M12.300 7l2.200 2.200L16.300 6.500zM4.700 10L2.500 7.800.8 10.500z" fill="currentColor" strokeWidth=".3" /></Line>
                Sync info
              </SyncButton>
            </PrinterRow>
            <NozzleRow>
              <Nozzle side="Left" count="1" flow="High ..."><Spool colors={["#fff"]} /></Nozzle>
              <Nozzle side="Right" count="4" flow="Stan..."><Spool wide colors={["#f6e3c8", "#1357b8", "#14a849", "#fff"]} /><Spool colors={["#111"]} /></Nozzle>
            </NozzleRow>

            <SectionHead>
              <Line w={9} color="#777"><path d="M1 2v8M11 2v8M3 2h6v8H3z" /><path d="M4.500 4h3v4h-3z" stroke={GREEN} /></Line>
              <SectionTitle>Project Filaments</SectionTitle>
              <HeadTools>
                <PillButton>Pu...</PillButton>
                <PillButton>Pu...</PillButton>
                <Line w={9} sw={1.2}><path d="M6 1.500v9M1.500 6h9" /></Line>
                <Line w={9} sw={1.2}><path d="M1.500 6h9" /></Line>
                <Line w={9} sw={1.1}><path d="M2 5V1.500h8L11 5v5.500H1V5h10" /><circle cx="9" cy="8.500" r="2.500" fill="#fff" /></Line>
                <Gear />
              </HeadTools>
            </SectionHead>
            <FilamentGrid>
              {filaments.map((f) => (
                <FilamentItem key={f.n}>
                  <ColorChip $color={f.color} $dark={f.dark} $outlined={f.outlined}>{f.n}</ColorChip>
                  <Dropdown $grow $tight label={`Filament ${f.n}`} value={f.name} icon={<BambuMark />} corner={f.synced} />
                  <RemoveButton aria-label="Remove filament"><Remove /></RemoveButton>
                </FilamentItem>
              ))}
            </FilamentGrid>

            <SectionHead>
              <Line w={9}><path d="M3 1h8L9 4H1zM1 6.500h8l2-3M1 9h8l2-3M1 11h8l2-3" stroke={GREEN} /></Line>
              <SectionTitle>Process</SectionTitle>
              <Segments><Segment $on>Global</Segment><Segment>Objects</Segment></Segments>
              <HeadTools>
                <SwitchLabel>Advanced<Switch type="checkbox" role="switch" defaultChecked /></SwitchLabel>
                <List size={9} />
                <ToolsIcon />
              </HeadTools>
            </SectionHead>
            <PresetRow>
              <Line w={8} color="#f0623f" sw={1.2}><path d="M3 10a4.500 4.500 0 1 1 7-2M10.500 5v3H8" /></Line>
              <Dropdown $grow $tight label="Process preset" value="* 0.24mm Standard @BBL H2C" />
              <Save size={8} />
              <Search size={9} />
            </PresetRow>
            <ProcessTabs>
              <ProcessTab $changed>Quality</ProcessTab>
              <ProcessTab $changed>Strength</ProcessTab>
              <ProcessTab>Speed</ProcessTab>
              <ProcessTab $changed $active>Support</ProcessTab>
              <ProcessTab>Others</ProcessTab>
            </ProcessTabs>
            <SettingsPane>
              <SettingsList>
                <Setting label="Support/object first layer gap" value="0.2" unit="mm" />
                <Setting label="Max bridge length" value="0" unit="mm" />
                <SettingRow $tall><span>Independent support layer height</span><Check type="checkbox" defaultChecked /></SettingRow>
                <GroupTitle><TreeIcon />Tree Support</GroupTitle>
                <Setting label="Branch distance" value="5" unit="mm" />
                <Setting label="Branch diameter" value="2" unit="mm" />
                <Setting label="Branch angle" value="45" unit="°" />
                <Setting label="Branch diameter angle" value="5" unit="°" />
              </SettingsList>
              <ScrollTrack><ScrollThumb /></ScrollTrack>
            </SettingsPane>
          </Sidebar>

          <Viewport>
            <BuildScene />
            <CollapseButton aria-label="Collapse sidebar"><Line w={8} sw={1.1}><path d="M3.500 3.500L1 6l2.500 2.500M8.500 3.500L11 6 8.500 8.500M6 2v8" /></Line></CollapseButton>
            <ToolStrip>
              {tools.map((t, i) => t
                ? <Tool key={i} $off={t[2]} aria-label={t[1]}><Line w={19} box={18} sw={0.9}>{toolShapes[t[0]]}</Line></Tool>
                : <ToolRule key={i} />)}
            </ToolStrip>
            <FitButton aria-label="Fit view"><Line w={12} box={12} sw={0.9}><path d="M1 3.500V1h2.500M8.500 1H11v2.500M11 8.500V11H8.500M3.500 11H1V8.500M6 3l2.500 1.500v3L6 9 3.500 7.500v-3zM3.500 4.500L6 6l2.500-1.500M6 6v3" /></Line></FitButton>
          </Viewport>
        </Workspace>
      </AppWindow>

      <DockArea>
        <DockDefs />
        <Dock>
          {dockApps.map((a, i) => a
            ? <DockItem key={i} $running={a.running} aria-label={a.name}>{a.art}{a.badge && <CountBadge>{a.badge}</CountBadge>}</DockItem>
            : <DockRule key={i} />)}
        </Dock>
      </DockArea>
    </Desktop>
  );
}
